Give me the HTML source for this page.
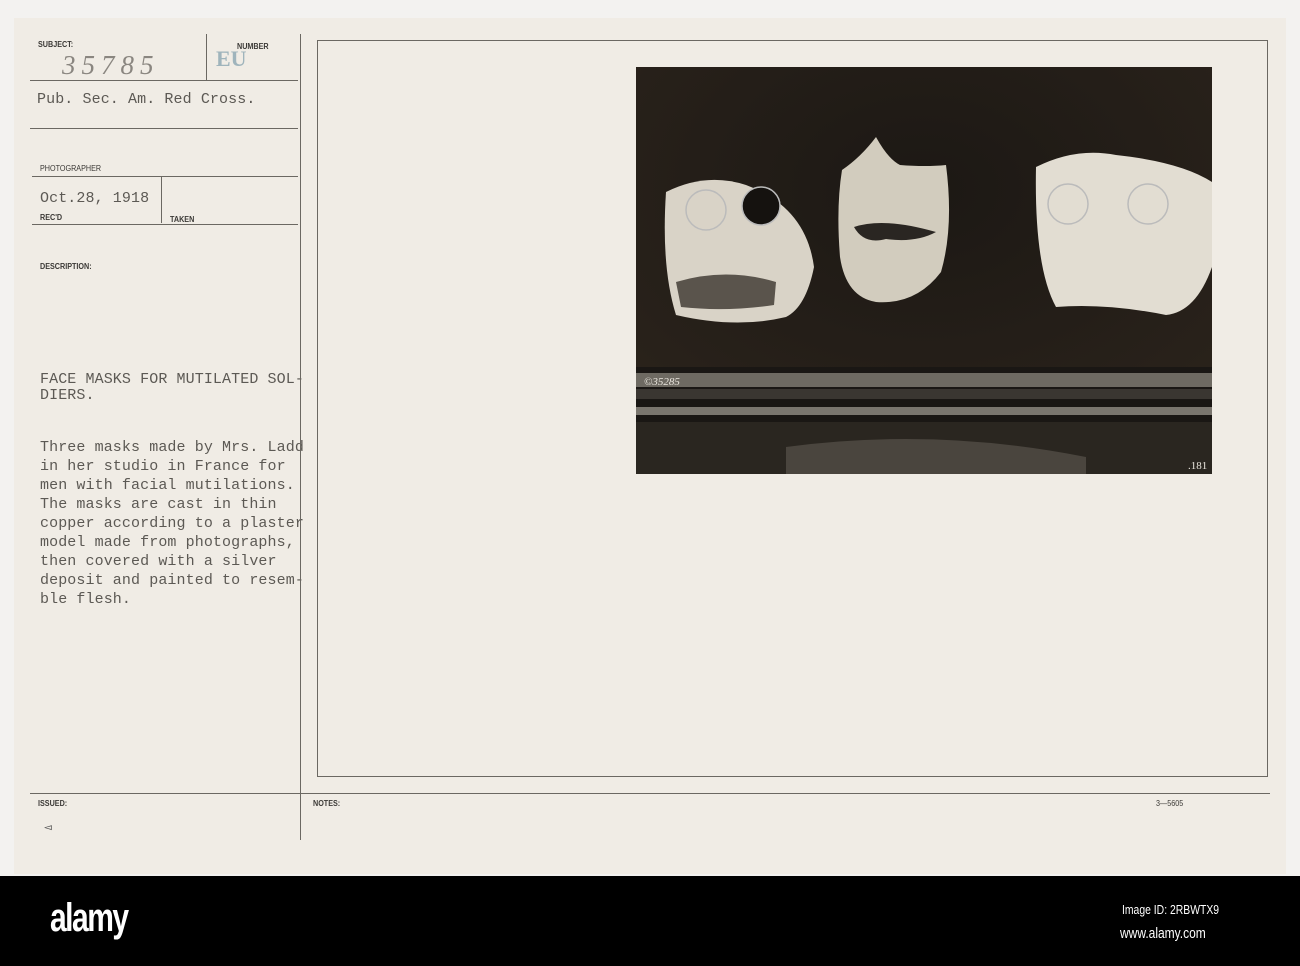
<!DOCTYPE html>
<html><head><meta charset="utf-8"><style>
html,body{margin:0;padding:0}
body{width:1300px;height:966px;position:relative;background:#f3f2f0;overflow:hidden;font-family:"Liberation Mono",monospace}
.card{position:absolute;left:14px;top:18px;width:1272px;height:856px;background:#f0ece5}
.abs{position:absolute}
.h{position:absolute;height:1px;background:#6b6862}
.v{position:absolute;width:1px;background:#6b6862}
.lab{position:absolute;font-family:"Liberation Sans",sans-serif;font-size:8px;font-weight:bold;color:#3a3835;transform:scaleX(0.9);transform-origin:left}
.t{position:absolute;font-size:15px;color:#5c5954;white-space:pre;line-height:15.6px;letter-spacing:0.1px}
.bar{position:absolute;left:0;top:876px;width:1300px;height:90px;background:#000}
</style></head><body>
<div class="card"></div>
<div class="lab" style="left:38px;top:40px">SUBJECT:</div>
<div class="lab" style="left:237px;top:42px">NUMBER</div>
<div class="abs" style="left:62px;top:50px;font-family:'Liberation Serif',serif;font-style:italic;font-size:27px;color:#8a8680;letter-spacing:6px">35785</div>
<div class="abs" style="left:216px;top:46px;font-family:'Liberation Serif',serif;font-size:22px;color:#9fb4bc;font-weight:bold">EU</div>
<div class="v" style="left:206px;top:34px;height:46px"></div>
<div class="h" style="left:30px;top:80px;width:268px"></div>
<div class="t" style="left:37px;top:92px">Pub. Sec. Am. Red Cross.</div>
<div class="h" style="left:30px;top:128px;width:268px"></div>
<div class="lab" style="left:40px;top:164px;font-weight:normal">PHOTOGRAPHER</div>
<div class="h" style="left:32px;top:176px;width:266px"></div>
<div class="t" style="left:40px;top:191px">Oct.28, 1918</div>
<div class="lab" style="left:40px;top:213px">REC'D</div>
<div class="lab" style="left:170px;top:215px">TAKEN</div>
<div class="v" style="left:161px;top:177px;height:46px"></div>
<div class="h" style="left:32px;top:224px;width:266px"></div>
<div class="lab" style="left:40px;top:262px">DESCRIPTION:</div>
<div class="t" style="left:40px;top:372px">FACE MASKS FOR MUTILATED SOL-
DIERS.</div>
<div class="t" style="left:40px;top:438px;line-height:19px">Three masks made by Mrs. Ladd
in her studio in France for
men with facial mutilations.
The masks are cast in thin
copper according to a plaster
model made from photographs,
then covered with a silver
deposit and painted to resem-
ble flesh.</div>
<div class="v" style="left:300px;top:34px;height:806px"></div>
<div class="abs" style="left:317px;top:40px;width:949px;height:735px;border:1px solid #6b6862"></div>
<div class="h" style="left:30px;top:793px;width:1240px"></div>
<div class="lab" style="left:38px;top:799px">ISSUED:</div>
<div class="lab" style="left:313px;top:799px">NOTES:</div>
<div class="lab" style="left:1156px;top:799px;font-weight:normal">3—5605</div>
<div class="abs" style="left:44px;top:820px;font-size:13px;color:#555">◅</div>
<svg class="abs" style="left:636px;top:67px" width="576" height="407" viewBox="0 0 576 407">
<defs><radialGradient id="bg" cx="0.5" cy="0.3" r="0.8"><stop offset="0" stop-color="#1c1814"/><stop offset="1" stop-color="#2c241c"/></radialGradient></defs>
<rect width="576" height="407" fill="url(#bg)"/>
<rect y="300" width="576" height="107" fill="#1a1714"/>
<rect y="306" width="576" height="14" fill="#6e6a62"/>
<rect y="322" width="576" height="10" fill="#3a3631"/>
<rect y="340" width="576" height="8" fill="#7a766e"/>
<rect y="355" width="576" height="52" fill="#2a2620"/>
<path d="M150 380 Q300 360 450 390 L450 407 L150 407Z" fill="#4a453e"/>
<path d="M30 125 Q70 105 110 118 Q170 140 178 200 Q170 240 150 250 Q100 262 40 248 Q25 200 30 125Z" fill="#d9d3c7"/>
<path d="M40 215 Q90 200 140 215 L138 238 Q90 245 45 240Z" fill="#5a544c"/>
<circle cx="70" cy="143" r="20" fill="none" stroke="#bbb" stroke-width="1.5"/>
<circle cx="125" cy="139" r="19" fill="#15120f" stroke="#bbb" stroke-width="1.5"/>
<path d="M206 103 Q225 90 240 70 Q252 92 264 98 Q290 100 310 98 Q318 160 305 205 Q280 238 240 235 Q210 230 204 190 Q200 140 206 103Z" fill="#d2ccbe"/>
<path d="M218 160 Q248 150 300 165 Q280 176 250 172 Q228 178 218 160Z" fill="#2a2622"/>
<path d="M400 100 Q440 80 480 88 Q545 95 576 115 L576 200 Q560 245 530 248 Q470 236 420 240 Q398 200 400 100Z" fill="#e2ddd2"/>
<circle cx="432" cy="137" r="20" fill="none" stroke="#bbb" stroke-width="1.5"/>
<circle cx="512" cy="137" r="20" fill="none" stroke="#bbb" stroke-width="1.5"/>
<text x="8" y="318" font-family="Liberation Serif,serif" font-style="italic" font-size="11" fill="#e8e4dc">©35285</text>
<text x="552" y="402" font-family="Liberation Serif,serif" font-size="11" fill="#e8e4dc">.181</text>
</svg>
<div class="bar"></div>
<div class="abs" style="left:50px;top:896px;color:#fff;font-family:'Liberation Sans',sans-serif;font-weight:bold;font-size:40px;letter-spacing:-2px;transform:scaleX(0.75);transform-origin:left">alamy</div>
<div class="abs" style="left:1122px;top:902px;color:#fff;font-family:'Liberation Sans',sans-serif;font-size:13px;transform:scaleX(0.8);transform-origin:left">Image ID: 2RBWTX9</div>
<div class="abs" style="left:1120px;top:925px;color:#fff;font-family:'Liberation Sans',sans-serif;font-size:15px;transform:scaleX(0.8);transform-origin:left">www.alamy.com</div>
</body></html>
